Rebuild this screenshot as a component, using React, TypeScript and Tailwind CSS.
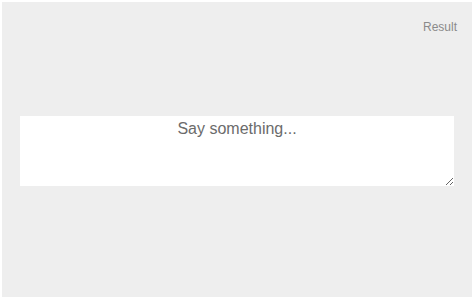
export default function App() {
  return (
    <div className="h-[299px] w-[474px] bg-white p-[2px] font-['Liberation_Sans',Arial,sans-serif]">
      <div className="flex h-full flex-col bg-[#eeeeee] pl-[18px] pr-[15px]">
        <div className="flex justify-end pt-[18px] text-[12px] leading-[14px] text-[#8a8a8a]">
          Result
        </div>
        <textarea
          placeholder="Say something..."
          className="mt-[82px] mr-[3px] h-[70px] w-[434px] bg-white pt-[2px] text-center text-[16px] leading-[22px] text-[#666] outline-none placeholder:text-[#6b6b6b]"
        />
      </div>
    </div>
  );
}
